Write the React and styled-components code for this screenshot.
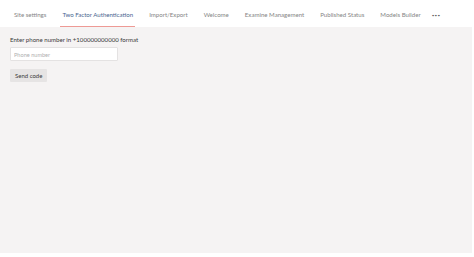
import React, { useState } from 'react';
import styled, { createGlobalStyle } from 'styled-components';

const GlobalStyle = createGlobalStyle`
  html, body {
    margin: 0;
    padding: 0;
    background: #ffffff;
    font-family: Lato, "Open Sans", sans-serif;
  }
`;

const Page = styled.div`
  width: 474px;
  height: 257px;
  display: flex;
  flex-direction: column;
  background: #ffffff;
`;

const TabBar = styled.nav`
  height: 27px;
  display: flex;
  align-items: stretch;
  gap: 12px;
  padding-left: 12px;
  background: #ffffff;
`;

const Tab = styled.div`
  display: flex;
  align-items: center;
  padding: 3px 2px 0;
  font-size: 6.1px;
  color: ${(p) => (p.$active ? '#4a6591' : '#858585')};
  border-bottom: 1px solid ${(p) => (p.$active ? '#ee9a95' : 'transparent')};
  white-space: nowrap;
`;

const More = styled.div`
  display: flex;
  align-items: center;
  margin-left: -3px;
  padding-top: 3px;
  font-size: 4.6px;
  letter-spacing: 0.3px;
  color: #666666;
`;

const Content = styled.main`
  flex: 1;
  margin: 0 2px 4px 0;
  padding: 8px 10px;
  display: flex;
  flex-direction: column;
  align-items: flex-start;
  background: #f5f3f3;
`;

const Label = styled.div`
  font-size: 6.1px;
  color: #3a3a3a;
  margin-top: 1px;
`;

const PhoneInput = styled.input`
  box-sizing: border-box;
  width: 108px;
  height: 14px;
  margin-top: 4px;
  padding: 0 3px;
  border: 1px solid #e4e2e2;
  border-radius: 1px;
  background: #ffffff;
  font-family: inherit;
  font-size: 5.6px;
  color: #222222;
  outline: none;

  &::placeholder {
    color: #b0b0b0;
  }
`;

const SendButton = styled.button`
  box-sizing: border-box;
  margin-top: 8px;
  height: 13px;
  padding: 0 5px;
  border: none;
  border-radius: 1px;
  background: #e6e4e4;
  font-family: inherit;
  font-size: 6px;
  color: #3a3a3a;
  cursor: pointer;
`;

const tabs = [
  'Site settings',
  'Two Factor Authentication',
  'Import/Export',
  'Welcome',
  'Examine Management',
  'Published Status',
  'Models Builder',
];

export default function App() {
  const [phone, setPhone] = useState('');

  return (
    <>
      <GlobalStyle />
      <Page>
        <TabBar>
          {tabs.map((t) => (
            <Tab key={t} $active={t === 'Two Factor Authentication'}>
              {t}
            </Tab>
          ))}
          <More>•••</More>
        </TabBar>
        <Content>
          <Label>Enter phone number in +100000000000 format</Label>
          <PhoneInput
            type="text"
            placeholder="Phone number"
            value={phone}
            onChange={(e) => setPhone(e.target.value)}
          />
          <SendButton type="button">Send code</SendButton>
        </Content>
      </Page>
    </>
  );
}
